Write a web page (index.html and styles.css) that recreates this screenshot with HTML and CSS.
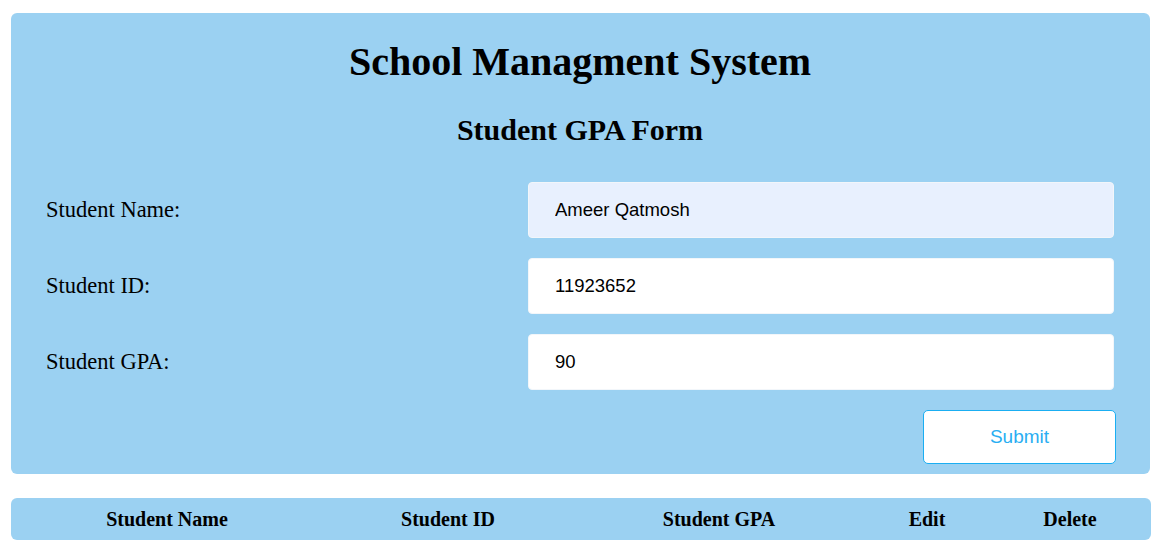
FILE: index.html
```html
<!DOCTYPE html>
<html lang="en">
<head>
    <meta charset="UTF-8">
    <meta name="viewport" content="width=device-width, initial-scale=1.0">
    <title>School Managment System</title>
    <link rel="stylesheet" href="styles.css">
</head>
<body>
    <!-- Form card -->
    <div class="container">
        <h1>School Managment System</h1>
        <h2>Student GPA Form</h2>
        <form class="form" onsubmit="return false">
            <label for="name">Student Name:</label>
            <input type="text" id="name" class="autofill" value="Ameer Qatmosh">
            <label for="sid">Student ID:</label>
            <input type="text" id="sid" value="11923652">
            <label for="gpa">Student GPA:</label>
            <input type="text" id="gpa" value="90">
            <div class="actions">
                <button type="submit">Submit</button>
            </div>
        </form>
    </div>

    <!-- Students table -->
    <table class="students">
        <thead>
            <tr>
                <th class="col-name">Student Name</th>
                <th class="col-id">Student ID</th>
                <th class="col-gpa">Student GPA</th>
                <th class="col-edit">Edit</th>
                <th class="col-delete">Delete</th>
            </tr>
        </thead>
        <tbody></tbody>
    </table>
</body>
</html>
```

FILE: styles.css
```css
body {
    font-family: "Liberation Serif", "Times New Roman", serif;
    margin: 0;
    padding: 13px 16px 0 11px;
    background: #ffffff;
    color: #000;
}

.container {
    background: #9bd1f2;
    border-radius: 6px;
    padding: 1px 36px 10px 35px;
}

h1 {
    text-align: center;
    font-size: 40px;
    margin: 26px 0 0;
    line-height: 44px;
}

h2 {
    text-align: center;
    font-size: 30px;
    margin: 29px 0 0;
    line-height: 34px;
}

.form {
    display: grid;
    grid-template-columns: 482px 1fr;
    row-gap: 20px;
    align-items: center;
    margin-top: 35px;
}

label {
    font-size: 22.5px;
}

input {
    height: 56px;
    box-sizing: border-box;
    border: 1px solid #f2f6fa;
    border-radius: 4px;
    background: #fff;
    padding: 0 26px;
    font-family: "Liberation Sans", Arial, sans-serif;
    font-size: 18.5px;
    color: #000;
    outline: none;
}

input.autofill {
    background: #e8f0fe;
}

.actions {
    grid-column: 1 / 3;
    display: flex;
    justify-content: flex-end;
    margin-right: -2px;
}

button {
    width: 193px;
    height: 54px;
    background: #fff;
    border: 1px solid #1aaef2;
    border-radius: 5px;
    color: #2aaef2;
    font-family: "Liberation Sans", Arial, sans-serif;
    font-size: 19px;
    cursor: pointer;
}

.students {
    width: 1140px;
    margin-top: 24px;
    background: #9bd1f2;
    border-radius: 6px;
    border-collapse: separate;
    border-spacing: 0;
}

.students th {
    height: 42px;
    padding: 0;
    font-size: 20px;
    text-align: center;
}

.col-name { width: 312px; }
.col-id { width: 250px; }
.col-gpa { width: 292px; }
.col-edit { width: 124px; }
.col-delete { width: 162px; }
```
